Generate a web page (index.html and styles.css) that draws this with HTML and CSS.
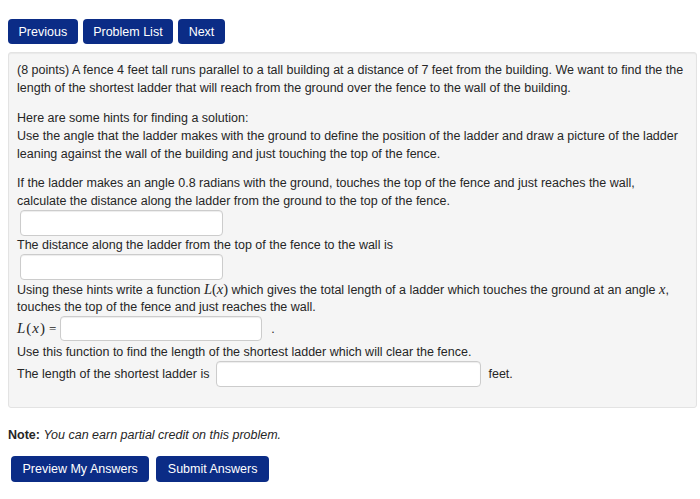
FILE: index.html
```html
<!DOCTYPE html>
<html>
<head>
<meta charset="utf-8">
<link rel="stylesheet" href="styles.css">
</head>
<body>
<div class="page">
  <div class="nav">
    <a class="btn nav-btn">Previous</a>
    <a class="btn nav-btn">Problem List</a>
    <a class="btn nav-btn">Next</a>
  </div>
  <div class="well">
    <div class="para first">
      <div class="line">(8 points) A fence 4 feet tall runs parallel to a tall building at a distance of 7 feet from the building. We want to find the the</div>
      <div class="line">length of the shortest ladder that will reach from the ground over the fence to the wall of the building.</div>
    </div>
    <div class="para">
      <div class="line">Here are some hints for finding a solution:</div>
      <div class="line">Use the angle that the ladder makes with the ground to define the position of the ladder and draw a picture of the ladder</div>
      <div class="line">leaning against the wall of the building and just touching the top of the fence.</div>
    </div>
    <div class="para">
      <div class="line">If the ladder makes an angle 0.8 radians with the ground, touches the top of the fence and just reaches the wall,</div>
      <div class="line">calculate the distance along the ladder from the ground to the top of the fence.</div>
      <div class="inrow"><span class="field f1"></span></div>
      <div class="line">The distance along the ladder from the top of the fence to the wall is</div>
      <div class="inrow"><span class="field f1"></span></div>
      <div class="line">Using these hints write a function <span class="math"><i>L</i>(<i>x</i>)</span> which gives the total length of a ladder which touches the ground at an angle <span class="math"><i>x</i></span>,</div>
      <div class="line">touches the top of the fence and just reaches the wall.</div>
      <div class="inrow lx"><span class="math lxlabel"><i>L</i>(<i>x</i>)</span><span class="eq">=</span><span class="field f2"></span><span class="dot">.</span></div>
      <div class="line">Use this function to find the length of the shortest ladder which will clear the fence.</div>
      <div class="inrow"><span class="label">The length of the shortest ladder is</span><span class="field f3"></span><span class="unit">feet.</span></div>
    </div>
  </div>
  <div class="note"><b>Note:</b> <i>You can earn partial credit on this problem.</i></div>
  <div class="actions">
    <a class="btn act-btn">Preview My Answers</a>
    <a class="btn act-btn">Submit Answers</a>
  </div>
</div>
</body>
</html>
```
FILE: styles.css
```css
html, body {
  margin: 0;
  padding: 0;
  background: #fff;
}
body {
  font-family: "Liberation Sans", Arial, sans-serif;
  font-size: 12.5px;
  color: #262626;
}
.page {
  padding: 19px 3px 0 8px;
}
.nav {
  display: flex;
  gap: 5px;
}
.btn {
  display: flex;
  align-items: center;
  justify-content: center;
  background: #0b2c86;
  color: #fff;
  border-radius: 4px;
  font-size: 12.5px;
  text-decoration: none;
  box-sizing: border-box;
}
.nav-btn {
  height: 25px;
  padding: 0 10.5px;
}
.well {
  margin-top: 8px;
  background: #f5f5f5;
  border: 1px solid #e3e3e3;
  border-radius: 3px;
  box-shadow: inset 0 1px 1px rgba(0,0,0,0.05);
  padding: 8px 8px 21px 8px;
  height: 356px;
  box-sizing: border-box;
}
.para {
  margin-top: 12px;
}
.para.first {
  margin-top: 0;
}
.para + .para + .para {
  margin-top: 11px;
}
.line {
  height: 18px;
  line-height: 18px;
  white-space: nowrap;
}
.inrow {
  height: 26px;
  display: flex;
  align-items: center;
  white-space: nowrap;
}
.field {
  display: inline-block;
  height: 26px;
  box-sizing: border-box;
  background: #fff;
  border: 1px solid #ccc;
  border-radius: 4px;
  box-shadow: inset 0 1px 1px rgba(0,0,0,0.075);
}
.f1 {
  width: 203px;
  margin-left: 3px;
}
.f2 {
  width: 202px;
  height: 25px;
}
.f3 {
  width: 265px;
  margin-left: 7px;
}
.math {
  font-family: "Liberation Serif", "Times New Roman", serif;
  font-size: 14.5px;
}
.math i {
  font-style: italic;
}
.lx {
  height: 25px;
}
.lxlabel {
  font-size: 15px;
  letter-spacing: 1px;
  margin-right: 3px;
}
.eq {
  font-family: "Liberation Serif", serif;
  font-size: 13px;
  margin-right: 4px;
}
.dot {
  margin-left: 9px;
}
.lx + .line {
  margin-top: 2px;
}
.unit {
  margin-left: 7px;
}
.note {
  margin-top: 18px;
  height: 18px;
  line-height: 18px;
}
.note b {
  font-weight: bold;
}
.actions {
  display: flex;
  gap: 7px;
  margin-top: 12px;
  padding-left: 3px;
}
.act-btn {
  height: 26px;
  padding: 0 11.5px;
}
```
